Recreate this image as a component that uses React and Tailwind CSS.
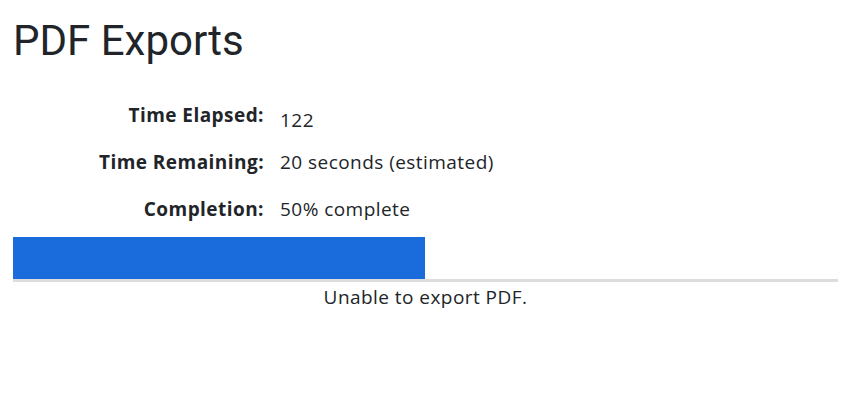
const rows = [
  { label: "Time Elapsed:", value: "122", big: true },
  { label: "Time Remaining:", value: "20 seconds (estimated)" },
  { label: "Completion:", value: "50% complete" },
]

export default function App() {
  const percent = 49.94

  return (
    <div className="min-h-screen bg-white px-[13px] text-[#212529] font-['Open_Sans','Noto_Sans',sans-serif]">
      <h1 className="pt-[16px] text-[42px] leading-[50px] font-normal font-['Roboto',sans-serif]">PDF Exports</h1>

      <div className="mt-[36px] flex flex-col gap-[20px] tracking-[0.45px]">
        {rows.map((row) => (
          <div key={row.label} className="flex items-start gap-4 h-[27px]">
            <div className="w-[251px] text-right text-[19px] leading-[27px] font-bold">{row.label}</div>
            <div className={row.big ? "pt-[5px] text-[19px] leading-[27px]" : "text-[19px] leading-[27px]"}>
              {row.value}
            </div>
          </div>
        ))}
      </div>

      <div className="mt-[14px] w-[825px] h-[45px] border-b-[3px] border-[#dddddd]">
        <div className="h-[42px] bg-[#1a6bdb]" style={{ width: `${percent}%` }} />
      </div>

      <p className="mt-[2px] w-[825px] text-center text-[19px] leading-[27px] tracking-[0.45px]">Unable to export PDF.</p>
    </div>
  )
}
